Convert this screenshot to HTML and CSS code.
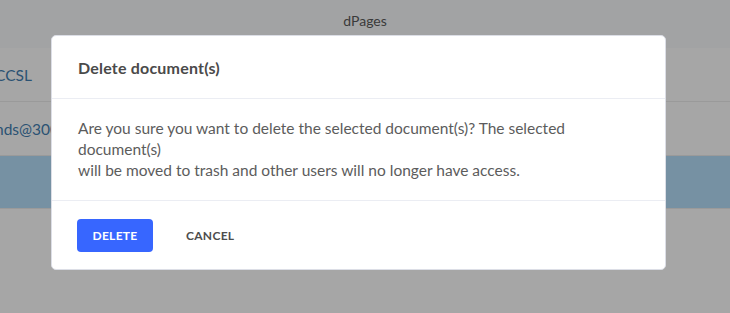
FILE: index.html
```html
<!DOCTYPE html>
<html lang="en">
<head>
    <meta charset="UTF-8">
    <title>dPages</title>
    <link rel="stylesheet" href="styles.css">
</head>
<body>
<div class="page">
    <header class="topbar">dPages</header>
    <div class="row"><span class="cell">CCSL</span></div>
    <div class="row"><span class="cell">nds@300.example</span></div>
    <div class="row selected"></div>
</div>

<div class="modal">
    <div class="modal-header">Delete document(s)</div>
    <div class="modal-body">
        Are you sure you want to delete the selected document(s)? The selected<br>
        document(s)<br>
        will be moved to trash and other users will no longer have access.
    </div>
    <div class="modal-footer">
        <button class="btn btn-primary">DELETE</button>
        <button class="btn btn-link">CANCEL</button>
    </div>
</div>
</body>
</html>
```

FILE: styles.css
```css
body {
    margin: 0;
    font-family: Lato, "Noto Sans", sans-serif;
    background-color: #a6a6a6;
    height: 313px;
    overflow: hidden;
}

.topbar {
    height: 48px;
    line-height: 42px;
    background-color: #a2a3a4;
    text-align: center;
    font-size: 14px;
    color: #3a3a3a;
}

.row {
    height: 53px;
    border-bottom: 1px solid #9a9a9a;
    display: flex;
    align-items: center;
}

.row .cell {
    margin-left: -5px;
    font-size: 15.5px;
    color: #2b5273;
}

.row.selected {
    background-color: #7691a3;
    height: 52px;
}

.modal {
    position: absolute;
    left: 51px;
    top: 35px;
    width: 613px;
    background-color: #fff;
    border: 1px solid #dcdee6;
    border-radius: 5px;
}

.modal-header {
    height: 62px;
    padding: 0 26px;
    display: flex;
    align-items: center;
    font-size: 16px;
    font-weight: bold;
    letter-spacing: 0.2px;
    color: #4a4a4a;
    border-bottom: 1px solid #ebedf3;
}

.modal-body {
    padding: 19px 26px 19px;
    font-size: 15.5px;
    line-height: 21px;
    color: #5c5c5c;
    border-bottom: 1px solid #ebedf3;
}

.modal-footer {
    padding: 18px 25px 17px;
    display: flex;
    align-items: center;
    gap: 18px;
}

.btn {
    font-family: inherit;
    font-size: 12px;
    font-weight: bold;
    letter-spacing: 0.3px;
    border: none;
    cursor: pointer;
    height: 33px;
    padding: 0 15px;
    border-radius: 4px;
}

.btn-primary {
    background-color: #3766ff;
    color: #fff;
    width: 76px;
}

.btn-link {
    background: none;
    color: #4d4d4d;
}
```
